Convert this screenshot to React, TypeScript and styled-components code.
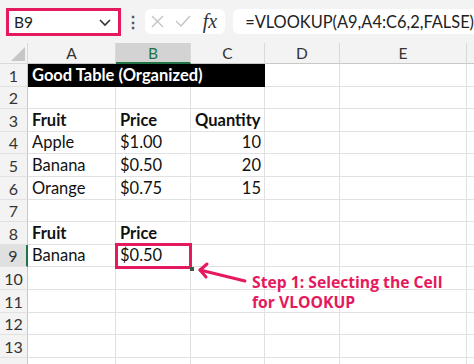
import React from "react";
import styled, { createGlobalStyle } from "styled-components";

const GlobalStyle = createGlobalStyle`
  html, body {
    margin: 0;
    padding: 0;
    background: #ffffff;
  }
  body {
    width: 474px;
    height: 364px;
    overflow: hidden;
  }
`;

const PINK = "#e5195d";
const GREEN = "#217346";

const Page = styled.div`
  position: relative;
  width: 474px;
  height: 364px;
  overflow: hidden;
  background: #fff;
  font-family: Lato, "Open Sans", sans-serif;
`;

const Toolbar = styled.div`
  height: 43px;
  background: #f3f3f3;
  display: flex;
  align-items: flex-start;
  padding-top: 8px;
  box-sizing: border-box;
`;

const NameBox = styled.div`
  margin-left: 6px;
  width: 119px;
  height: 28px;
  box-sizing: border-box;
  border: 3px solid ${PINK};
  background: #fff;
  display: flex;
  align-items: center;
  justify-content: space-between;
  padding: 0 6px 0 5px;
  font-size: 15.5px;
  color: #222;
`;

const Dots = styled.div`
  width: 24px;
  height: 28px;
  display: flex;
  align-items: center;
  justify-content: center;
  color: #555;
  font-size: 16px;
  font-weight: 700;
`;

const FxBox = styled.div`
  width: 83px;
  height: 25px;
  margin-top: 1px;
  background: #fff;
  border-radius: 6px;
  display: flex;
  align-items: center;
  padding: 0 4px 0 6px;
  box-sizing: border-box;
  gap: 11px;
`;

const FxText = styled.span`
  font-family: "Liberation Serif", serif;
  font-style: italic;
  font-size: 20px;
  color: #333;
  margin-left: 1px;
`;

const FormulaBox = styled.div`
  flex: 1;
  margin-left: 8px;
  height: 25px;
  margin-top: 1px;
  background: #fff;
  border-radius: 6px 0 0 6px;
  display: flex;
  align-items: center;
  padding-left: 12px;
  font-size: 16.4px;
  color: #222;
  white-space: nowrap;
`;

const Sheet = styled.div`
  display: grid;
  grid-template-columns: 28px 88px 75px 74px 75px 127px 1fr;
  grid-template-rows: 21px repeat(14, 22.6px);
`;

const Corner = styled.div`
  background: #f3f3f3;
  border-right: 1px solid #d9d9d9;
  border-bottom: 1px solid #d9d9d9;
  box-sizing: border-box;
  position: relative;
  &::after {
    content: "";
    position: absolute;
    right: 2px;
    bottom: 2px;
    border-style: solid;
    border-width: 0 0 14px 14px;
    border-color: transparent transparent #c6c6c6 transparent;
  }
`;

const ColHead = styled.div<{ $sel?: boolean }>`
  background: ${(p) => (p.$sel ? "#d3d3d3" : "#f3f3f3")};
  color: ${(p) => (p.$sel ? GREEN : "#333")};
  border-right: 1px solid #d9d9d9;
  border-bottom: ${(p) => (p.$sel ? `2px solid ${GREEN}` : "1px solid #c8c8c8")};
  box-sizing: border-box;
  display: flex;
  align-items: center;
  justify-content: center;
  font-size: 15.5px;
`;

const RowHead = styled.div<{ $sel?: boolean }>`
  background: ${(p) => (p.$sel ? "#e0e0e0" : "#f3f3f3")};
  color: #333;
  border-right: ${(p) => (p.$sel ? `2px solid ${GREEN}` : "1px solid #c8c8c8")};
  border-bottom: 1px solid #e1e1e1;
  box-sizing: border-box;
  display: flex;
  align-items: flex-end;
  justify-content: center;
  padding-bottom: 1px;
  font-size: 16px;
`;

const Cell = styled.div<{ $bold?: boolean; $right?: boolean; $dark?: boolean }>`
  background: ${(p) => (p.$dark ? "#000" : "#fff")};
  color: ${(p) => (p.$dark ? "#fff" : "#111")};
  font-weight: ${(p) => (p.$bold ? 700 : 400)};
  border-right: 1px solid ${(p) => (p.$dark ? "#000" : "#e1e1e1")};
  border-bottom: 1px solid ${(p) => (p.$dark ? "#000" : "#e1e1e1")};
  box-sizing: border-box;
  display: flex;
  align-items: flex-end;
  justify-content: ${(p) => (p.$right ? "flex-end" : "flex-start")};
  padding: 0 3px 1px 4px;
  font-size: 16.5px;
  white-space: nowrap;
  overflow: visible;
  position: relative;
`;

const Banner = styled(Cell)`
  grid-column: span 3;
`;

const Highlight = styled.div`
  position: absolute;
  left: 115px;
  top: 243px;
  width: 77px;
  height: 26px;
  box-sizing: border-box;
  border: 3px solid ${PINK};
  &::after {
    content: "";
    position: absolute;
    right: -5px;
    bottom: -5px;
    width: 4px;
    height: 4px;
    background: #3a5a40;
  }
`;

const Arrow = styled.svg`
  position: absolute;
  left: 194px;
  top: 260px;
`;

const Note = styled.div`
  position: absolute;
  left: 252px;
  top: 272px;
  color: ${PINK};
  font-family: "Open Sans", sans-serif;
  font-weight: 700;
  font-size: 15.7px;
  line-height: 20px;
`;

type Row = { n: number; label?: boolean; cells: (string | null)[]; bold?: boolean; sel?: boolean };

const rows: Row[] = [
  { n: 2, cells: [] },
  { n: 3, cells: ["Fruit", "Price", "Quantity"], bold: true },
  { n: 4, cells: ["Apple", "$1.00", "10"] },
  { n: 5, cells: ["Banana", "$0.50", "20"] },
  { n: 6, cells: ["Orange", "$0.75", "15"] },
  { n: 7, cells: [] },
  { n: 8, cells: ["Fruit", "Price"], bold: true },
  { n: 9, cells: ["Banana", "$0.50"], sel: true },
  { n: 10, cells: [] },
  { n: 11, cells: [] },
  { n: 12, cells: [] },
  { n: 13, cells: [] },
  { n: 14, label: false, cells: [] },
];

const cols = ["A", "B", "C", "D", "E", ""];

const App = () => {
  return (
    <Page>
      <GlobalStyle />
      <Toolbar>
        <NameBox>
          <span>B9</span>
          <svg width="14" height="10" viewBox="0 0 14 10">
            <path d="M2 3 L7 8 L12 3" fill="none" stroke="#333" strokeWidth="1.6" />
          </svg>
        </NameBox>
        <Dots>⋮</Dots>
        <FxBox>
          <svg width="13" height="13" viewBox="0 0 13 13">
            <path d="M1 1 L12 12 M12 1 L1 12" stroke="#c4c4c4" strokeWidth="1.4" />
          </svg>
          <svg width="16" height="13" viewBox="0 0 16 13">
            <path d="M1 6 L6 11 L15 1" fill="none" stroke="#c4c4c4" strokeWidth="1.4" />
          </svg>
          <FxText>fx</FxText>
        </FxBox>
        <FormulaBox>=VLOOKUP(A9,A4:C6,2,FALSE)</FormulaBox>
      </Toolbar>

      <Sheet>
        <Corner />
        {cols.map((c) => (
          <ColHead key={c || "x"} $sel={c === "B"}>
            {c}
          </ColHead>
        ))}

        <RowHead>1</RowHead>
        <Banner $dark $bold>
          Good Table (Organized)
        </Banner>
        <Cell />
        <Cell />
        <Cell />

        {rows.map((r) => (
          <React.Fragment key={r.n}>
            <RowHead $sel={r.sel}>{r.label === false ? "" : r.n}</RowHead>
            {cols.map((c, i) => (
              <Cell key={c || "x"} $bold={r.bold} $right={i === 2 && !r.bold}>
                {r.cells[i] ?? ""}
              </Cell>
            ))}
          </React.Fragment>
        ))}
      </Sheet>

      <Highlight />
      <Arrow width="56" height="28" viewBox="0 0 56 28">
        <path d="M6 10 L51 21" stroke={PINK} strokeWidth="3" strokeLinecap="round" />
        <path d="M13 4 L6 10 L12 17" fill="none" stroke={PINK} strokeWidth="3" strokeLinecap="round" strokeLinejoin="round" />
      </Arrow>
      <Note>
        Step 1: Selecting the Cell
        <br />
        for VLOOKUP
      </Note>
    </Page>
  );
};

export default App;
